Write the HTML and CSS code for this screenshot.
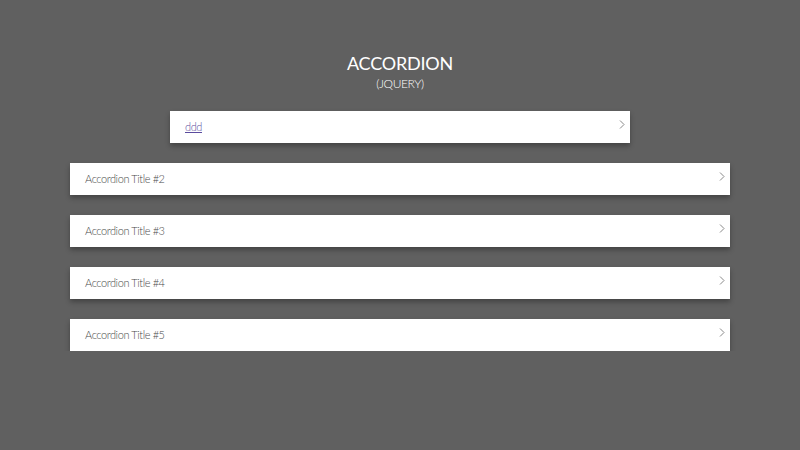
FILE: index.html
```html
<!DOCTYPE html>
<html>
<head>
<meta charset="utf-8">
<link rel="stylesheet" href="styles.css">
</head>
<body>
<header class="heading">
  <h1>ACCORDION</h1>
  <p>(JQUERY)</p>
</header>
<ul class="accordion">
  <li class="item item-open">
    <div class="item-head"><a href="#">ddd</a><svg class="chev" viewBox="0 0 6 9"><polyline points="1,0.5 5,4.5 1,8.5"/></svg></div>
  </li>
  <li class="item"><div class="item-head">Accordion Title #2<svg class="chev" viewBox="0 0 6 9"><polyline points="1,0.5 5,4.5 1,8.5"/></svg></div></li>
  <li class="item"><div class="item-head">Accordion Title #3<svg class="chev" viewBox="0 0 6 9"><polyline points="1,0.5 5,4.5 1,8.5"/></svg></div></li>
  <li class="item"><div class="item-head">Accordion Title #4<svg class="chev" viewBox="0 0 6 9"><polyline points="1,0.5 5,4.5 1,8.5"/></svg></div></li>
  <li class="item"><div class="item-head">Accordion Title #5<svg class="chev" viewBox="0 0 6 9"><polyline points="1,0.5 5,4.5 1,8.5"/></svg></div></li>
</ul>
</body>
</html>
```
FILE: styles.css
```css
html, body {
  margin: 0;
  padding: 0;
  background: #606060;
  font-family: Lato, "Open Sans", sans-serif;
}
.heading {
  text-align: center;
  color: #fff;
  padding-top: 51px;
}
.heading h1 {
  margin: 0;
  font-family: Lato, sans-serif;
  font-weight: 400;
  font-size: 18px;
  line-height: 24px;
  letter-spacing: -0.2px;
}
.heading p {
  margin: 1px 0 0;
  font-family: Lato, sans-serif;
  font-weight: 300;
  font-size: 12px;
  line-height: 16px;
  letter-spacing: -0.4px;
}
.accordion {
  list-style: none;
  margin: 19px 70px 0;
  padding: 0;
  display: flex;
  flex-direction: column;
  gap: 20px;
}
.item {
  background: #fff;
  box-shadow: 0 3px 5px rgba(0, 0, 0, 0.3);
}
.item-open {
  margin: 0 100px;
}
.item-head {
  position: relative;
  height: 32px;
  line-height: 32px;
  padding: 0 15px;
  font-family: Lato, sans-serif;
  font-weight: 300;
  font-size: 11px;
  letter-spacing: -0.4px;
  color: #4a4a4a;
}
.item-head a {
  color: #5b4c9e;
  text-decoration: underline;
}
.chev {
  position: absolute;
  right: 5px;
  top: 9px;
  width: 6px;
  height: 9px;
  fill: none;
  stroke: #888;
  stroke-width: 1;
}
```
